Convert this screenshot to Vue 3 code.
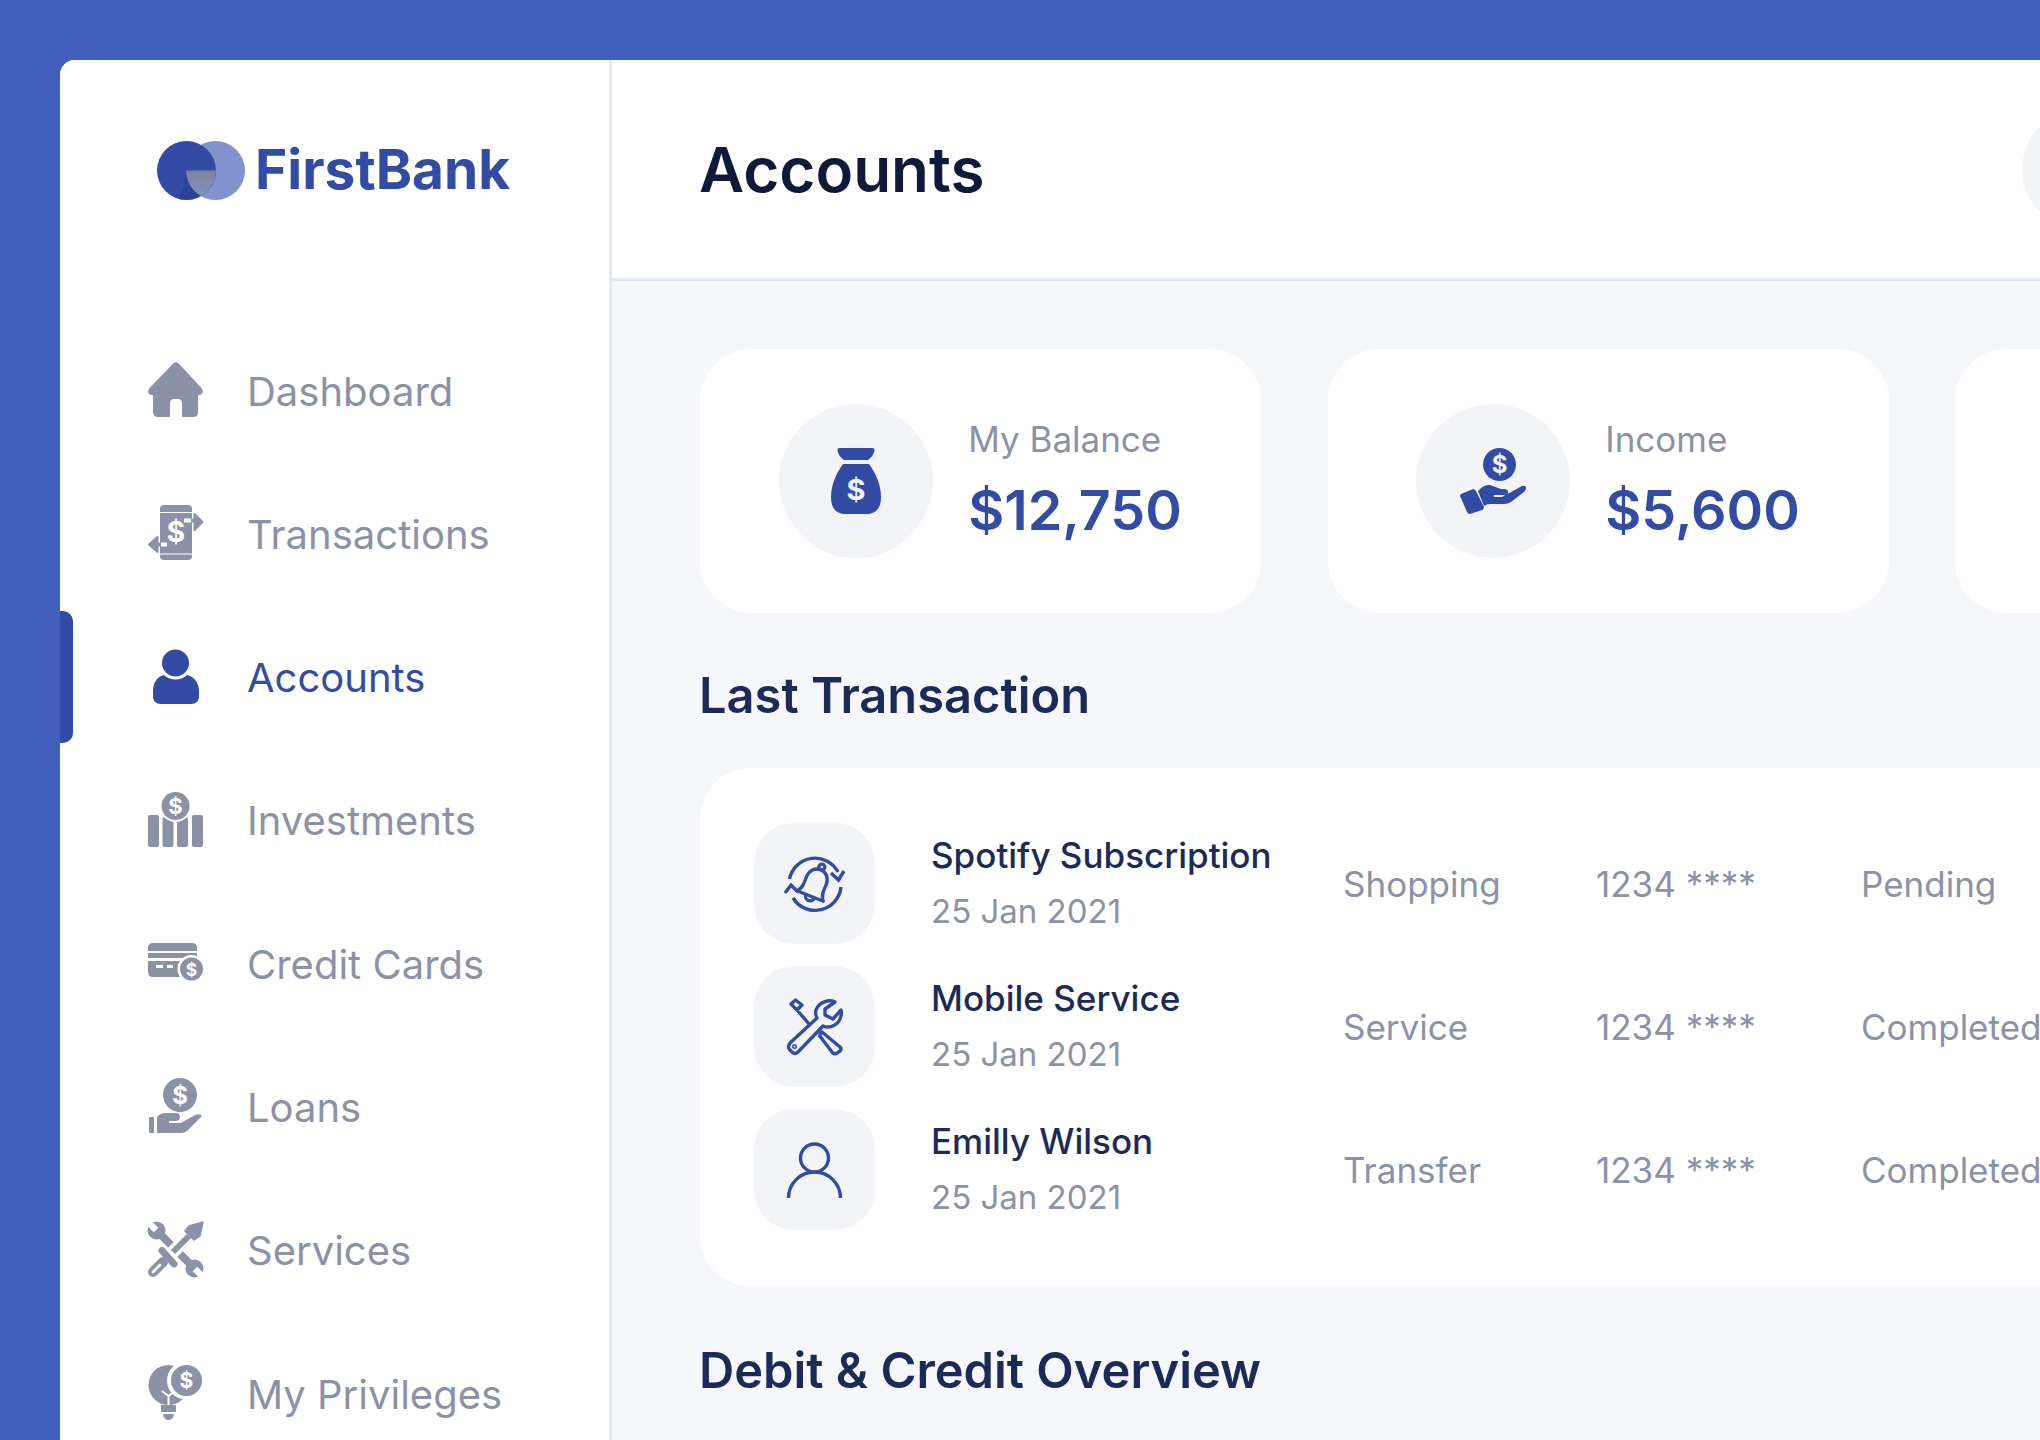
<script setup>
const rows = [
  { id: 'bell', title: 'Spotify Subscription', date: '25 Jan 2021', cat: 'Shopping', acct: '1234 ****', status: 'Pending' },
  { id: 'tools', title: 'Mobile Service', date: '25 Jan 2021', cat: 'Service', acct: '1234 ****', status: 'Completed' },
  { id: 'person', title: 'Emilly Wilson', date: '25 Jan 2021', cat: 'Transfer', acct: '1234 ****', status: 'Completed' }
]
</script>

<template>
  <div class="page">
    <div class="shell">
      <aside class="sidebar">
        <div class="brand">
          <svg class="logo" width="88" height="59" viewBox="0 0 88 59">
            <defs>
              <linearGradient id="wedge" x1="0" y1="0" x2="0" y2="1">
                <stop offset="0" stop-color="#7f8398" />
                <stop offset=".5" stop-color="#7f8398" />
                <stop offset="1" stop-color="#8093cf" />
              </linearGradient>
              <clipPath id="lens"><circle cx="29.5" cy="29.5" r="29.5" /></clipPath>
            </defs>
            <circle cx="58.5" cy="29.5" r="29.5" fill="#8093cf" />
            <circle cx="29.5" cy="29.5" r="29.5" fill="#324ca5" />
            <g clip-path="url(#lens)">
              <path d="M30 29.5H59V59H22Z" fill="#2b3f8f" opacity=".75" />
              <circle cx="58.5" cy="29.5" r="29.5" fill="url(#wedge)" clip-path="inset(29.5px 0 0 0)" />
            </g>
          </svg>
          <span class="brand-name">FirstBank</span>
        </div>
        <nav class="nav">
          <a class="nav-item">
            <svg class="nav-icon" viewBox="0 0 55 55"><path d="M25.5 1.2Q28 -.6 30.5 1.2L53.5 26Q57 31 52 33H50V50Q50 55 45 55H34V41Q34 37 30 37H26Q22 37 22 41V55H10Q5 55 5 50V33H3Q-2 31 1.5 26Z" /></svg>
            <span>Dashboard</span>
          </a>
          <a class="nav-item">
            <svg class="nav-icon" viewBox="0 0 55 55">
              <rect x="12" y="0" width="32" height="55" rx="4" />
              <path d="M12 7.500H44M12 49H44" stroke="#fff" stroke-width="1" />
              <path d="M46.500 9 54.500 17 46.500 25Z" stroke="#8b92a8" stroke-width="2" stroke-linejoin="round" />
              <path d="M9.500 32 1 39.500 9.500 47Z" stroke="#8b92a8" stroke-width="2" stroke-linejoin="round" />
              <path d="M36 15.500H43M13 39.500H19" stroke="#fff" stroke-width="4" />
              <path d="M44 15.500H47M9 39.500H12" stroke="#8b92a8" stroke-width="4" />
              <text x="28" y="37" class="glyph" font-size="28" fill="#fff" text-anchor="middle">$</text>
            </svg>
            <span>Transactions</span>
          </a>
          <a class="nav-item active">
            <svg class="nav-icon" viewBox="0 0 55 55">
              <path d="M5 42C5 33 10 26 18 26H37C45 26 51 33 51 42V47Q51 55 43 55H13Q5 55 5 47Z" />
              <circle cx="27.5" cy="14" r="16.5" fill="#fff" />
              <circle cx="27.5" cy="14" r="13.5" />
            </svg>
            <span>Accounts</span>
            <i class="marker"></i>
          </a>
          <a class="nav-item">
            <svg class="nav-icon" viewBox="0 0 55 55">
              <rect x="0" y="23" width="11" height="32" rx="2" />
              <rect x="14.5" y="25" width="11" height="30" rx="2" />
              <rect x="29" y="25" width="11" height="30" rx="2" />
              <rect x="44" y="23" width="11" height="32" rx="2" />
              <circle cx="27.5" cy="14" r="16" fill="#fff" />
              <circle cx="27.5" cy="14" r="14" />
              <text x="27.5" y="22" class="glyph" font-size="22" fill="#fff" text-anchor="middle">$</text>
            </svg>
            <span>Investments</span>
          </a>
          <a class="nav-item">
            <svg class="nav-icon" viewBox="0 0 55 55">
              <path d="M0 16V13Q0 8 5 8H44Q49 8 49 13V16Z" />
              <rect x="0" y="18" width="49" height="5" />
              <path d="M0 26H49V37Q49 42 44 42H5Q0 42 0 37Z" />
              <path d="M8 31.5H15M19 31.5H25" stroke="#fff" stroke-width="3" />
              <circle cx="43.5" cy="34" r="14" fill="#fff" />
              <circle cx="43.5" cy="34" r="11.5" />
              <text x="43.5" y="40.5" class="glyph" font-size="17" fill="#fff" text-anchor="middle">$</text>
            </svg>
            <span>Credit Cards</span>
          </a>
          <a class="nav-item">
            <svg class="nav-icon" viewBox="0 0 55 55">
              <circle cx="32" cy="17" r="17" />
              <text x="32" y="26" class="glyph" font-size="24" fill="#fff" text-anchor="middle">$</text>
              <rect x="1" y="39" width="5" height="16" rx="1" />
              <path d="M9 39Q12 35 18 35H27Q32 35 32 39Q32 43 27 43H21V45H33L47 37Q52 35 54 38L42 50Q38 55 33 55H9Z" />
            </svg>
            <span>Loans</span>
          </a>
          <a class="nav-item">
            <svg class="nav-icon" viewBox="0 0 55 55">
              <path d="M11 11 45 45" stroke="#8b92a8" stroke-width="8" />
              <circle cx="8.5" cy="8.5" r="9" /><circle cx="46.5" cy="46.5" r="9" />
              <path d="M0 0 8 8M55 55 47 47" stroke="#fff" stroke-width="6.500" />
              <path d="M18 37 31 24" stroke="#fff" stroke-width="13" />
              <path d="M25 30 41 14" stroke="#8b92a8" stroke-width="6" />
              <path d="M55 0 52 14 46 18 37 9 41 4Z" stroke="#8b92a8" stroke-width="1.5" stroke-linejoin="round" />
              <path d="M14 28.5 26 42" stroke="#fff" stroke-width="10" stroke-linecap="round" />
              <path d="M14 28.5 26 42" stroke="#8b92a8" stroke-width="7" stroke-linecap="round" />
              <path d="M5 50 15 40" stroke="#8b92a8" stroke-width="10" stroke-linecap="round" />
              <path d="M5 50 12 43" stroke="#fff" stroke-width="2.6" stroke-linecap="round" />
            </svg>
            <span>Services</span>
          </a>
          <a class="nav-item">
            <svg class="nav-icon" viewBox="0 0 55 55">
              <circle cx="20.5" cy="20" r="20" />
              <path d="M13 40H28V47H13ZM15 49H26Q25 55 20.5 55T15 49Z" />
              <path d="M20.5 40V30M14 26 20.5 31 27 26" stroke="#fff" stroke-width="2" fill="none" />
              <path d="M13 47.7H28" stroke="#fff" stroke-width="1.4" />
              <circle cx="38" cy="15.5" r="19" fill="#fff" />
              <circle cx="38.5" cy="15.5" r="15.5" />
              <text x="38.5" y="23" class="glyph" font-size="21" fill="#fff" text-anchor="middle">$</text>
            </svg>
            <span>My Privileges</span>
          </a>
        </nav>
      </aside>

      <div class="content">
        <header class="topbar">
          <h1>Accounts</h1>
          <div class="avatar"></div>
        </header>
        <main class="main">
          <section class="stats">
            <div class="stat">
              <div class="stat-icon">
                <svg width="50" height="66" viewBox="0 0 50 66">
                  <path d="M9 0H41Q44 0 43.5 3 42.5 8 37 12H13Q7.500 8 6.500 3 6 0 9 0Z" />
                  <path d="M12 16H38C44 24 50 36 50 49Q50 66 35 66H15Q0 66 0 49C0 36 6 24 12 16Z" />
                  <text x="25" y="52" class="glyph" font-size="29" fill="#f3f4f7" text-anchor="middle">$</text>
                </svg>
              </div>
              <div class="stat-text">
                <span class="stat-label">My Balance</span>
                <strong class="stat-value">$12,750</strong>
              </div>
            </div>
            <div class="stat">
              <div class="stat-icon">
                <svg width="66" height="66" viewBox="0 0 66 66">
                  <circle cx="39.500" cy="16.500" r="16.500" />
                  <text x="39.500" y="25" class="glyph" font-size="24" fill="#f3f4f7" text-anchor="middle">$</text>
                  <path d="M1 46 13 41Q15 41 16 43L24 59Q24 61 22 62L10 66Q8 66 7 64L0 48Q0 47 1 46Z" />
                  <path d="M18 43Q24 36 30 37L41 41H45Q49 42 48 45 47 48 44 47H34Q33 49 36 49H42L62 38Q66 37 66 40 66 42 64 44L51 54Q48 56 44 56H30Q27 56 24 58Z" />
                </svg>
              </div>
              <div class="stat-text">
                <span class="stat-label">Income</span>
                <strong class="stat-value">$5,600</strong>
              </div>
            </div>
            <div class="stat"></div>
          </section>

          <h2 class="section-title first">Last Transaction</h2>
          <section class="tx-card">
            <div v-for="row in rows" :key="row.title" class="tx-row">
              <div class="tx-icon">
                <svg v-if="row.id === 'bell'" width="60" height="56" viewBox="0 0 60 56" class="line">
                  <path d="M4.500 23A26 26 0 0 1 53 16" />
                  <path d="M46 17 53.500 24 59 15" />
                  <path d="M56 31A26 26 0 0 1 8 42" />
                  <path d="M0 37 6 29 13 36" />
                  <g transform="rotate(22 30 28) translate(30 28) scale(1.18) translate(-30 -27)">
                    <path d="M18 38C22 34 21 29 21 24 21 18 25 14 30 14 35 14 39 18 39 24 39 29 38 34 42 38Z" stroke-linejoin="round" stroke-width="2.800" />
                    <circle cx="30" cy="11.500" r="2.500" stroke-width="2.800" /><path d="M26 38A4 4 0 0 0 34 38" stroke-width="2.800" />
                  </g>
                </svg>
                <svg v-else-if="row.id === 'tools'" width="55" height="55" viewBox="0 0 55 55" class="line">
                  <path d="M48 3C42 0 32 3 29 11 28 14 29 17 30 19L3 44Q0 48 3 51L5 53Q8 56 11 53L36 27C43 30 52 26 54 17 55 14 54 12 54 11L46 20 38 16 38 10Z" stroke-linejoin="round" />
                  <path d="M4 5 8.500 1 15 6 10 11ZM10 11 23 26M32 36 35 33 53 48Q55 50 53 52L50 54Q47 56 45 53L32 36" stroke-linejoin="round" />
                  <circle cx="7.500" cy="47.500" r=".8" />
                </svg>
                <svg v-else width="55" height="56" viewBox="0 0 55 56" class="line">
                  <circle cx="27.500" cy="16" r="14" />
                  <path d="M1.500 56A26 26 0 0 1 53.500 56" />
                </svg>
              </div>
              <div class="tx-main">
                <div class="tx-title">{{ row.title }}</div>
                <div class="tx-date">{{ row.date }}</div>
              </div>
              <div class="tx-cell cat">{{ row.cat }}</div>
              <div class="tx-cell acct">{{ row.acct }}</div>
              <div class="tx-cell status">{{ row.status }}</div>
            </div>
          </section>

          <h2 class="section-title second">Debit &amp; Credit Overview</h2>
        </main>
      </div>
    </div>
  </div>
</template>

<style>
html, body { margin: 0; overflow: hidden; }
</style>

<style scoped>
.page {
  box-sizing: border-box;
  width: 2040px;
  height: 1440px;
  overflow: hidden;
  padding: 60px 0 0 60px;
  background: #415fbb;
  font-family: Inter, "Noto Sans", sans-serif;
}
.shell {
  display: flex;
  height: 1600px;
  width: 1980px;
  background: #fff;
  border-radius: 15px 0 0 0;
  overflow: hidden;
}
.sidebar {
  position: relative;
  box-sizing: border-box;
  flex: 0 0 549px;
  padding-top: 81px;
  background: #fff;
}
.brand {
  display: flex;
  align-items: center;
  gap: 10px;
  height: 59px;
  padding-left: 97px;
}
.logo { flex: none; }
.brand-name {
  color: #324ca5;
  font-size: 55px;
  font-weight: 700;
  padding-bottom: 3px;
}
.nav {
  display: flex;
  flex-direction: column;
  gap: 88.3px;
  margin-top: 162px;
  padding-left: 88px;
}
.nav-item {
  display: flex;
  align-items: center;
  gap: 44px;
  height: 55px;
  color: #8b92a8;
  font-size: 40px;
  font-weight: 400;
}
.nav-item span { padding-top: 3px; }
.nav-icon {
  flex: none;
  width: 55px;
  height: 55px;
  fill: #8b92a8;
  overflow: visible;
}
.nav-item.active { color: #324ca5; }
.nav-item.active .nav-icon { fill: #324ca5; }
.marker {
  position: absolute;
  left: 0;
  top: 551px;
  width: 13px;
  height: 132px;
  background: #324ca5;
  border-radius: 0 10px 10px 0;
}
.glyph {
  font-family: Inter, sans-serif;
  font-weight: 700;
}
.content {
  flex: 1;
  min-width: 0;
  border-left: 3px solid #e6e9f1;
  background: #f5f7fa;
}
.topbar {
  box-sizing: border-box;
  display: flex;
  align-items: center;
  height: 221px;
  padding-left: 87px;
  background: #fff;
  border-bottom: 3px solid #e6e9f1;
}
.topbar h1 {
  flex: 1;
  margin: 0;
  padding-top: 1px;
  color: #0f1a3a;
  font-size: 62px;
  font-weight: 600;
}
.avatar {
  flex: none;
  width: 120px;
  height: 120px;
  margin-right: -102px;
  border-radius: 50%;
  background: #f3f4f7;
}
.main { padding: 68px 0 0 88px; }
.stats { display: flex; gap: 66.5px; }
.stat {
  flex: 0 0 561px;
  height: 264px;
  display: flex;
  align-items: center;
  justify-content: center;
  gap: 35px;
  background: #fff;
  border-radius: 52px;
}
.stat-icon {
  flex: none;
  width: 154px;
  height: 154px;
  display: flex;
  align-items: center;
  justify-content: center;
  border-radius: 50%;
  background: #f3f4f7;
}
.stat-icon svg { fill: #324ca5; }
.stat-text { display: flex; flex-direction: column; gap: 14px; }
.stat-label { color: #8b92a8; font-size: 35px; line-height: 44px; }
.stat-value { color: #324ca5; font-size: 55.5px; line-height: 70px; font-weight: 600; }
.section-title {
  margin: 0 0 0 -1px;
  color: #1c2a5a;
  font-size: 48.8px;
  line-height: 56px;
  font-weight: 600;
}
.section-title.first { margin-top: 55px; margin-bottom: 44px; }
.section-title.second { margin-top: 57px; }
.tx-card {
  display: flex;
  flex-direction: column;
  gap: 22px;
  width: 1500px;
  box-sizing: border-box;
  padding: 55px 0 56px;
  background: #fff;
  border-radius: 50px;
}
.tx-row {
  display: grid;
  grid-template-columns: 121px 468px 253px 265px 200px;
  align-items: center;
  margin-left: 54px;
}
.tx-icon {
  width: 121px;
  height: 121px;
  display: flex;
  align-items: center;
  justify-content: center;
  border-radius: 40px;
  background: #f3f4f7;
}
.line { fill: none; stroke: #324ca5; stroke-width: 3.4; overflow: visible; }
.tx-main { padding: 0 0 3px 56px; }
.tx-title { color: #1c2a5a; font-size: 35px; line-height: 44px; font-weight: 500; white-space: nowrap; }
.tx-date { color: #8b92a8; font-size: 33px; line-height: 42px; margin-top: 13px; }
.tx-cell { color: #8b92a8; font-size: 35px; white-space: nowrap; }
</style>
